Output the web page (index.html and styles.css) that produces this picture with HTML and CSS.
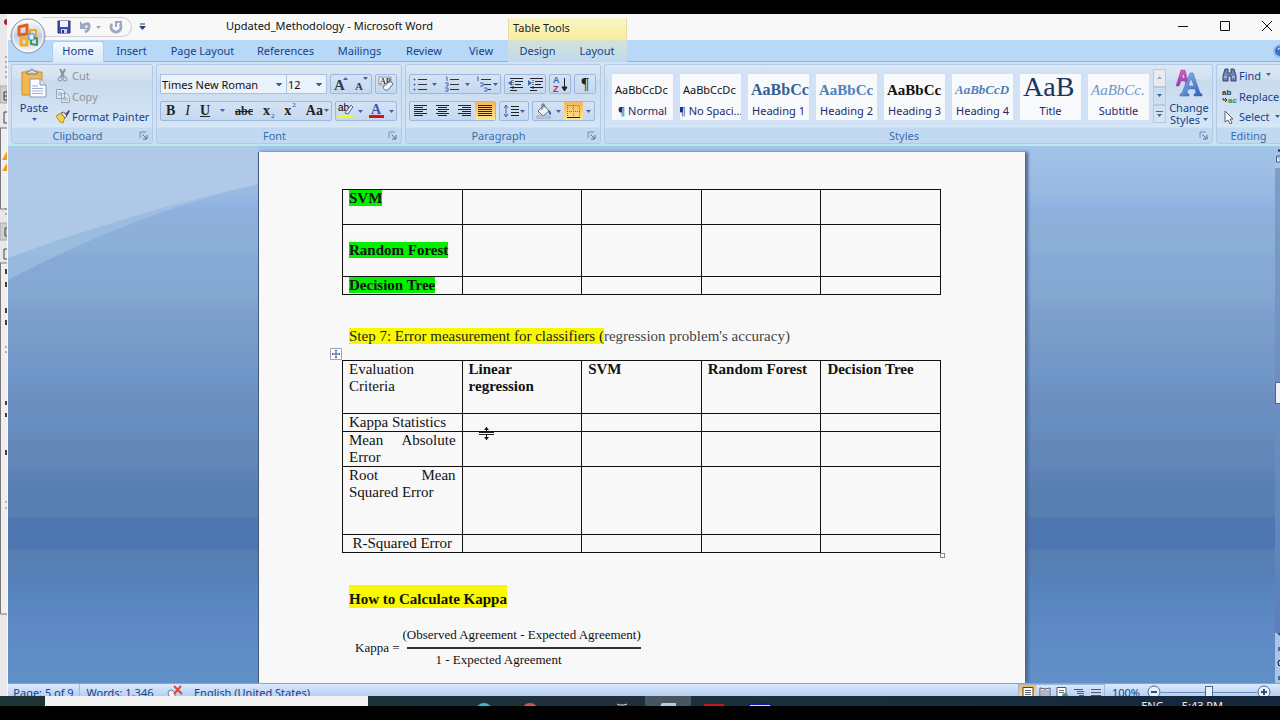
FILE: index.html
```html
<!DOCTYPE html>
<html lang="en">
<head>
  <meta charset="UTF-8">
  <meta name="viewport" content="width=device-width, initial-scale=1.0">
  <title>Updated_Methodology - Microsoft Word</title>
  <link rel="stylesheet" href="styles.css">
</head>
<body>

  <!-- Shared shapes -->
  <svg class="defs" width="0" height="0" aria-hidden="true">
    <defs>
      <path id="arrow" d="M0 0h5L2.500 3z" fill="#3f62a5"/>
      <g id="launcher"><path d="M1 7V1h6" fill="none" stroke="#6f8db5"/><path d="M3.500 3.500l4 4M8 4v4H4" fill="none" stroke="#4d6b96"/></g>
      <linearGradient id="orb" x1="0" y1="0" x2="0" y2="1"><stop offset="0" stop-color="#fff"/><stop offset="0.5" stop-color="#c3cddd"/><stop offset="1" stop-color="#f6f9fd"/></linearGradient>
      <linearGradient id="purple" x1="0" y1="0" x2="0" y2="1"><stop offset="0" stop-color="#d75bc4"/><stop offset="1" stop-color="#8b3fa8"/></linearGradient>
      <linearGradient id="blue" x1="0" y1="0" x2="1" y2="1"><stop offset="0" stop-color="#8fc0f5"/><stop offset="1" stop-color="#2f5fb5"/></linearGradient>
    </defs>
  </svg>

  <div class="desktop">
    <!-- Edge of the window behind -->
    <svg class="behind" width="8" height="682" viewBox="0 0 8 682" aria-hidden="true">
      <path d="M0 0h8v682H0z" fill="#e9e7e8"/>
      <path d="M0 114h7v81H0zM0 249h7v351H0z" fill="#f1eeef"/>
      <path d="M0 114h7M.5 114v81H7M0 249h7M.5 249v351H7" fill="none" stroke="#777"/>
      <path d="M0 72h7v17H0zM0 209h7v17H0z" fill="#cfcdce" stroke="#aaa"/>
      <path d="M7 78H4v8h3M4 82h3M7 214H5v8h2M7 98H4v11h3M7 235H4v10h3" fill="none" stroke="#444"/>
      <path d="M7 137v9H2zM7 149v8H2z" fill="#e9a11c"/>
      <circle cx="7" cy="8" r="3" fill="#a12a35"/>
      <path d="M5 43h2M5 48h2M5 53h2M5 58h2M5 63h2M5 195h2M5 200h2M5 333h2M5 338h2M5 488h2M5 494h2" stroke="#777"/>
      <path d="M6 255v5M6 268v5M6 294v5M6 306v5M6 387v4M6 399v4M6 436v5" stroke="#443c38" stroke-width="2"/>
      <path d="M7.500 0v682" stroke="#f9f9fc"/>
    </svg>

    <div class="window">
      <button class="office-button" aria-label="Office Button">
        <svg width="38" height="38" viewBox="0 0 38 38">
          <circle cx="19" cy="19" r="17" fill="url(#orb)" stroke="#8895aa"/>
          <circle cx="19" cy="19" r="15" fill="none" stroke="#fff" opacity=".7"/>
          <path d="M10 10l8-2v9l-8 1z" fill="none" stroke="#e1601d" stroke-width="3" stroke-linejoin="round"/>
          <path d="M21 13h6v7h-6z" fill="none" stroke="#f0a72a" stroke-width="2" stroke-linejoin="round"/>
          <path d="M12 21h6v7h-6z" fill="none" stroke="#edae28" stroke-width="3" stroke-linejoin="round"/>
          <path d="M22 22l6-1v7l-6-1z" fill="none" stroke="#3e9a57" stroke-width="2" stroke-linejoin="round"/>
          <path d="M20 17h5v6h-5z" fill="#dff1fb" stroke="#3a8fd2"/>
        </svg>
      </button>

      <header class="titlebar">
        <div class="quick-access">
          <div class="quick-pill">
            <button aria-label="Save"><svg width="14" height="14" viewBox="0 0 14 14"><path d="M1 1h12v12H1z" fill="#4148a8" stroke="#29307f"/><path d="M3 1h8v6H3z" fill="#eef3fc"/><path d="M4 9h6v4H4z" fill="#c9d2ee"/><path d="M5 10h2v3H5z" fill="#29307f"/></svg></button>
            <button aria-label="Undo"><svg width="22" height="14" viewBox="0 0 22 14"><path d="M3 6q8-5 7 1 0 3-4 5" fill="none" stroke="#9ba9c4" stroke-width="3"/><path d="M1 1v8h7z" fill="#9ba9c4"/><path d="M17 6h5l-2.500 3z" fill="#a7a7ae"/></svg></button>
            <button aria-label="Repeat"><svg width="14" height="14" viewBox="0 0 14 14"><path d="M3 4a5 5 0 1 0 8 0" fill="none" stroke="#9ba9c4" stroke-width="3"/><path d="M7 1v6M7 2h5v4" fill="none" stroke="#9ba9c4" stroke-width="2"/></svg></button>
          </div>
          <button class="customize" aria-label="Customize Quick Access Toolbar"><svg width="7" height="8" viewBox="0 0 7 8"><path d="M1 1h5" stroke="#254078"/><path d="M0 3h7L3.500 7z" fill="#254078"/></svg></button>
        </div>
        <div class="doc-title">Updated_Methodology - Microsoft Word</div>
        <div class="context-title">Table Tools</div>
        <div class="window-buttons">
          <button aria-label="Minimize"><svg width="12" height="12" viewBox="0 0 12 12"><path d="M1 6.500h10" stroke="#111"/></svg></button>
          <button aria-label="Maximize"><svg width="12" height="12" viewBox="0 0 12 12"><path d="M1.500 1.500h9v9h-9z" fill="none" stroke="#111"/></svg></button>
          <button aria-label="Close"><svg width="12" height="12" viewBox="0 0 12 12"><path d="M1 1l10 10M11 1L1 11" stroke="#111"/></svg></button>
        </div>
      </header>

      <nav class="tabs">
        <button class="tab active">Home</button>
        <button class="tab">Insert</button>
        <button class="tab">Page Layout</button>
        <button class="tab">References</button>
        <button class="tab">Mailings</button>
        <button class="tab">Review</button>
        <button class="tab">View</button>
        <button class="tab context">Design</button>
        <button class="tab context">Layout</button>
        <button class="help" aria-label="Help"><svg width="14" height="14" viewBox="0 0 14 14"><circle cx="7" cy="7" r="6" fill="#3471d4" stroke="#9dbbe8" stroke-width="2"/><path d="M5 6q0-2 2-2t2 2-2 2" fill="none" stroke="#fff"/></svg></button>
      </nav>

      <div class="ribbon">
        <section class="group clipboard">
          <div class="group-body">
            <button class="big-button">
              <svg width="28" height="30" viewBox="0 0 28 30"><path d="M2 4h20v23H2z" fill="#f0b84e" stroke="#c98f2c"/><path d="M7 6V3h3q2-4 4 0h3v3z" fill="#d5d5d5" stroke="#777"/><path d="M10 11h10l6 6v12H10z" fill="#fafcff" stroke="#8797b4"/><path d="M20 11v6h6" fill="#dde6f4" stroke="#8797b4"/><path d="M12 18h6M12 20.500h11M12 23h11M12 25.500h11" stroke="#9fb2d4"/></svg>
              <span>Paste</span>
              <svg width="5" height="4"><use href="#arrow"/></svg>
            </button>
            <div class="small-list">
              <button class="disabled"><svg width="14" height="14" viewBox="0 0 14 14"><path d="M4 1l4 8M9 1L5 9" stroke="#8793a5" stroke-width="2"/><circle cx="4" cy="11" r="2" fill="none" stroke="#8793a5"/><circle cx="9" cy="11" r="2" fill="none" stroke="#8793a5"/></svg>Cut</button>
              <button class="disabled"><svg width="14" height="14" viewBox="0 0 14 14"><path d="M.5.500h6l2 2v7h-8zM5.500 4.500h5l3 3v6h-8z" fill="#e2e8f1" stroke="#9aa5b8"/><path d="M7 9h5M7 11h5M2 4h3M2 6h3" stroke="#9aa5b8"/></svg>Copy</button>
              <button><svg width="14" height="14" viewBox="0 0 14 14"><path d="M0 6l5-3 4 4-2 6-3-1z" fill="#f6cf4c" stroke="#b8902c"/><path d="M5 3l3-1 3 4-2 2z" fill="#e8e8e8" stroke="#666"/><path d="M9 4l4-4 1 1-3 5z" fill="#454b75"/></svg>Format Painter</button>
            </div>
          </div>
          <div class="group-label"><span>Clipboard</span><button aria-label="Clipboard options"><svg width="9" height="9"><use href="#launcher"/></svg></button></div>
        </section>

        <section class="group font">
          <div class="group-body rows">
            <div class="row">
              <div class="combos">
                <select class="font-name" aria-label="Font"><option>Times New Roman</option></select>
                <select class="font-size" aria-label="Font Size"><option>12</option></select>
              </div>
              <div class="toolbox">
                <button aria-label="Grow Font"><svg width="20" height="18" viewBox="0 0 20 18"><text x="3" y="15" class="letter" font-size="15">A</text><path d="M12 5h5l-2.500-3z" fill="#3f62a5"/></svg></button>
                <button aria-label="Shrink Font"><svg width="20" height="18" viewBox="0 0 20 18"><text x="4" y="15" class="letter" font-size="11">A</text><use href="#arrow" x="12" y="2"/></svg></button>
              </div>
              <div class="toolbox">
                <button aria-label="Clear Formatting"><svg width="20" height="18" viewBox="0 0 20 18"><path d="M3 2h12v8H3z" fill="#f5f7fc" stroke="#8c97ad"/><text x="4" y="9" class="letter" font-size="8">AB</text><path d="M7 12l6-5q3-1 4 2l-5 6q-4 1-5-3z" fill="#f5f6fa" stroke="#5d6e94"/></svg></button>
              </div>
            </div>
            <div class="row">
              <div class="toolbox grow">
                <button class="text-tool bold">B</button>
                <button class="text-tool italic">I</button>
                <button class="text-tool underline">U</button>
                <button aria-label="Underline style"><svg width="5" height="4"><use href="#arrow"/></svg></button>
                <button class="text-tool strike">abc</button>
                <button class="text-tool script">x<sub>2</sub></button>
                <button class="text-tool script">x<sup>2</sup></button>
                <button class="text-tool case">Aa<svg width="5" height="4"><use href="#arrow"/></svg></button>
              </div>
              <div class="toolbox">
                <button aria-label="Text Highlight Color"><svg width="30" height="18" viewBox="0 0 30 18"><text x="2" y="9" font-size="10" font-family="Liberation Sans">ab</text><path d="M9 11l6-8 2 2-5 7z" fill="#e4e7ee" stroke="#5c6a88"/><path d="M2 13h15v3H2z" fill="#fdf900"/><use href="#arrow" x="22" y="8"/></svg></button>
                <button aria-label="Font Color"><svg width="30" height="18" viewBox="0 0 30 18"><text x="5" y="12" font-size="14" font-weight="bold" fill="#3b5d9e" font-family="Liberation Serif">A</text><path d="M3 13h15v3H3z" fill="#e80d0d"/><use href="#arrow" x="23" y="8"/></svg></button>
              </div>
            </div>
          </div>
          <div class="group-label"><span>Font</span><button aria-label="Font options"><svg width="9" height="9"><use href="#launcher"/></svg></button></div>
        </section>

        <section class="group paragraph">
          <div class="group-body rows">
            <div class="row">
              <div class="toolbox">
                <button aria-label="Bullets"><svg width="32" height="18" viewBox="0 0 32 18"><path d="M8 4.500h9M8 9.500h9M8 14.500h9" stroke="#333"/><path d="M4 4h1v1H4zM4 9h1v1H4zM4 14h1v1H4z" fill="#3b66b5" stroke="#3b66b5"/><use href="#arrow" x="22" y="8"/></svg></button>
                <button aria-label="Numbering"><svg width="32" height="18" viewBox="0 0 32 18"><path d="M8 4.500h9M8 9.500h9M8 14.500h9" stroke="#333"/><path d="M4 2h1v4M3 8h3v3H4M3 13h3v3H3" fill="none" stroke="#3b66b5"/><use href="#arrow" x="23" y="8"/></svg></button>
                <button aria-label="Multilevel List"><svg width="26" height="18" viewBox="0 0 26 18"><path d="M7 4.500h10M10 9.500h7M14 14.500h3" stroke="#333"/><path d="M3 2h1v4M6 8h3v3H6M10 13h3v3h-3" fill="none" stroke="#3b66b5"/><use href="#arrow" x="19" y="8"/></svg></button>
              </div>
              <div class="toolbox">
                <button aria-label="Decrease Indent"><svg width="20" height="18" viewBox="0 0 20 18"><path d="M5 3.500h13M10 6.500h8M10 9.500h6M5 12.500h13M5 15.500h7" stroke="#222"/><path d="M8 3v13" stroke="#222" stroke-dasharray="1 1"/><path d="M3 8l4-3v6z" fill="#3b66b5"/></svg></button>
                <button aria-label="Increase Indent"><svg width="20" height="18" viewBox="0 0 20 18"><path d="M5 3.500h13M10 6.500h8M10 9.500h6M5 12.500h13M5 15.500h7" stroke="#222"/><path d="M8 3v13" stroke="#222" stroke-dasharray="1 1"/><path d="M7 8L3 5v6z" fill="#3b66b5"/></svg></button>
              </div>
              <div class="toolbox">
                <button aria-label="Sort"><svg width="20" height="18" viewBox="0 0 20 18"><text x="3" y="8" font-size="9" font-weight="bold" fill="#3b66b5" font-family="Liberation Sans">A</text><text x="3" y="17" font-size="9" font-weight="bold" fill="#a8323e" font-family="Liberation Sans">Z</text><path d="M14.500 3v12M12 12l2.500 4 2.500-4z" fill="#222" stroke="#222"/></svg></button>
              </div>
              <div class="toolbox">
                <button class="text-tool pilcrow">¶</button>
              </div>
            </div>
            <div class="row">
              <div class="toolbox">
                <button aria-label="Align Left"><svg width="21" height="18" viewBox="0 0 21 18"><path d="M4 3.500h13M4 5.500h9M4 7.500h13M4 9.500h9M4 11.500h13M4 13.500h9" stroke="#222"/></svg></button>
                <button aria-label="Center"><svg width="22" height="18" viewBox="0 0 22 18"><path d="M5 3.500h13M7 5.500h9M5 7.500h13M7 9.500h9M5 11.500h13M7 13.500h9" stroke="#222"/></svg></button>
                <button aria-label="Align Right"><svg width="22" height="18" viewBox="0 0 22 18"><path d="M5 3.500h13M9 5.500h9M5 7.500h13M9 9.500h9M5 11.500h13M9 13.500h9" stroke="#222"/></svg></button>
                <button class="pressed" aria-label="Justify"><svg width="20" height="18" viewBox="0 0 20 18"><path d="M3 3.500h14M3 5.500h14M3 7.500h14M3 9.500h14M3 11.500h14M3 13.500h14" stroke="#222"/></svg></button>
              </div>
              <div class="toolbox">
                <button aria-label="Line Spacing"><svg width="28" height="18" viewBox="0 0 28 18"><path d="M11 4.500h8M11 7.500h8M11 10.500h8M11 13.500h8" stroke="#222"/><path d="M6 4v10M4 6l2-3 2 3M4 12l2 3 2-3" fill="none" stroke="#3b66b5"/><use href="#arrow" x="20" y="8"/></svg></button>
              </div>
              <div class="toolbox">
                <button aria-label="Shading"><svg width="31" height="18" viewBox="0 0 31 18"><path d="M5 9l6-6 5 6-6 5z" fill="#f1f4f8" stroke="#5d6b82"/><path d="M9 8V2h2v4" fill="none" stroke="#5d6b82"/><path d="M15 8q4 1 3 5l-2-1z" fill="#3b66b5"/><path d="M4 14h13v2H4z" fill="#e9eef6" stroke="#8f9db2"/><use href="#arrow" x="23" y="8"/></svg></button>
                <button class="pressed" aria-label="Borders"><svg width="19" height="18" viewBox="0 0 19 18"><path d="M3.500 3.500h12v11M9.500 3v12M3 9.500h13M3.500 3v12" fill="none" stroke="#8b6a3c" stroke-dasharray="1 1"/><path d="M3 15.500h13" stroke="#222"/></svg></button>
                <button aria-label="Border style"><svg width="11" height="18"><use href="#arrow" x="3" y="8"/></svg></button>
              </div>
            </div>
          </div>
          <div class="group-label"><span>Paragraph</span><button aria-label="Paragraph options"><svg width="9" height="9"><use href="#launcher"/></svg></button></div>
        </section>

        <section class="group styles">
          <div class="group-body">
            <div class="gallery">
              <button class="style-card"><span class="preview">AaBbCcDc</span><span>¶ Normal</span></button>
              <button class="style-card"><span class="preview">AaBbCcDc</span><span>¶ No Spaci...</span></button>
              <button class="style-card"><span class="preview heading1">AaBbCc</span><span>Heading 1</span></button>
              <button class="style-card"><span class="preview heading2">AaBbCc</span><span>Heading 2</span></button>
              <button class="style-card"><span class="preview heading3">AaBbCc</span><span>Heading 3</span></button>
              <button class="style-card"><span class="preview heading4">AaBbCcD</span><span>Heading 4</span></button>
              <button class="style-card"><span class="preview title">AaB</span><span>Title</span></button>
              <button class="style-card"><span class="preview subtitle">AaBbCc.</span><span>Subtitle</span></button>
            </div>
            <div class="gallery-scroll">
              <button class="off" aria-label="Previous styles"><svg width="5" height="4" viewBox="0 0 5 4"><path d="M0 3h5L2.500 0z" fill="#a5a9b0"/></svg></button>
              <button aria-label="Next styles"><svg width="5" height="4"><use href="#arrow"/></svg></button>
              <button aria-label="More styles"><svg width="7" height="7" viewBox="0 0 7 7"><path d="M0 .5h7" stroke="#3f62a5"/><use href="#arrow" x="1" y="3"/></svg></button>
            </div>
            <button class="big-button change">
              <svg width="28" height="30" viewBox="0 0 28 30"><path d="M1 18L6 2h4l4 15h-3l-1-4H6l-2 5zM7 10h3L8 5z" fill="url(#purple)" fill-rule="evenodd" stroke="#a045a5" stroke-width=".5"/><path d="M5 28v-2l2-1L15 5h3l7 20 2 1v2h-8v-2l2-1-1-4h-7l-1 4 2 1v2zM13 18h6l-3-8z" fill="url(#blue)" fill-rule="evenodd" stroke="#3a66b0" stroke-width=".5"/></svg>
              <span>Change</span>
              <span>Styles <svg width="5" height="4"><use href="#arrow"/></svg></span>
            </button>
          </div>
          <div class="group-label"><span>Styles</span><button aria-label="Styles options"><svg width="9" height="9"><use href="#launcher"/></svg></button></div>
        </section>

        <section class="group editing">
          <div class="group-body">
            <div class="small-list">
              <button><svg width="15" height="14" viewBox="0 0 15 14"><path d="M3 1h3v4h3V1h3l2 7v5H9V8H6v5H1V8z" fill="#6d86b8" stroke="#2c4376"/><path d="M2 9h3M10 9h3" stroke="#dce6f6"/></svg>Find<svg class="drop" width="5" height="4"><use href="#arrow"/></svg></button>
              <button><svg width="15" height="14" viewBox="0 0 15 14"><text x="0" y="6" font-size="8" font-weight="bold" font-family="Liberation Sans" fill="#333">ab</text><text x="6" y="14" font-size="8" font-weight="bold" font-family="Liberation Sans" fill="#2b8a45">ac</text><path d="M1 9v2h4M3 9l2 2-2 2" fill="none" stroke="#333"/></svg>Replace</button>
              <button><svg width="15" height="14" viewBox="0 0 15 14"><path d="M3 1l8 8H8l2 4-2 1-2-4-3 2z" fill="#fff" stroke="#555d70"/></svg>Select<svg class="drop" width="5" height="4"><use href="#arrow"/></svg></button>
            </div>
          </div>
          <div class="group-label"><span>Editing</span></div>
        </section>
      </div>

      <main class="workspace">
        <svg class="sweep" viewBox="0 0 250 140" preserveAspectRatio="none" aria-hidden="true">
          <path d="M0 0H250V38Q125 68 0 134z" fill="#a5c4e4" opacity=".6"/>
          <path d="M0 0H250V38Q125 66 0 112z" fill="#b2cae8" opacity=".85"/>
        </svg>

        <article class="page">
          <table class="grid models">
            <tbody>
              <tr><th><mark class="green">SVM</mark></th><td></td><td></td><td></td><td></td></tr>
              <tr class="tall"><th><mark class="green">Random Forest</mark></th><td></td><td></td><td></td><td></td></tr>
              <tr class="short"><th><mark class="green">Decision Tree</mark></th><td></td><td></td><td></td><td></td></tr>
            </tbody>
          </table>

          <p class="step"><mark>Step 7: Error measurement for classifiers (</mark>regression problem's accuracy)</p>

          <div class="table-wrap">
            <svg class="move-handle" width="12" height="12" viewBox="0 0 12 12" aria-hidden="true"><path d="M.5.500h11v11H.500z" fill="#fff" stroke="#98a3b8"/><path d="M6 2v8M2 6h8M5 3l1-1 1 1M5 9l1 1 1-1M3 5L2 6l1 1M9 5l1 1-1 1" fill="none" stroke="#3b5c9c"/></svg>
            <table class="grid errors">
              <thead>
                <tr><td>Evaluation Criteria</td><th>Linear regression</th><th>SVM</th><th>Random Forest</th><th>Decision Tree</th></tr>
              </thead>
              <tbody>
                <tr class="short"><td>Kappa Statistics</td><td></td><td></td><td></td><td></td></tr>
                <tr><td class="justify">Mean Absolute Error</td><td></td><td></td><td></td><td></td></tr>
                <tr class="deep"><td class="justify">Root Mean Squared Error</td><td></td><td></td><td></td><td></td></tr>
                <tr class="short"><td class="centered">R-Squared Error</td><td></td><td></td><td></td><td></td></tr>
              </tbody>
            </table>
            <span class="resize-handle"></span>
            <svg class="pointer" width="15" height="15" viewBox="0 0 15 15" aria-hidden="true"><path d="M0 6.500h15M0 8.500h15" stroke="#222"/><path d="M7.500 1v5M7.500 9v5" stroke="#111"/><path d="M5 4h5L7.500 1zM5 11h5l-2.500 3z" fill="#111"/></svg>
          </div>

          <h2><mark>How to Calculate Kappa</mark></h2>

          <div class="formula">
            <span>Kappa =</span>
            <div class="fraction">
              <span>(Observed Agreement - Expected Agreement)</span>
              <span class="under">1 - Expected Agreement</span>
            </div>
          </div>
        </article>

        <div class="scrollbar">
          <svg width="5" height="22" viewBox="0 0 5 22" aria-hidden="true"><path d="M3 4.500h2" stroke="#222" stroke-width="2"/><path d="M1.500 10v6H5M1.500 10H5" fill="#eef3fa" stroke="#445a80"/></svg>
          <div class="track">
            <div class="thumb"></div>
          </div>
          <svg width="5" height="50" viewBox="0 0 5 50" aria-hidden="true"><path d="M2 0h3v3z" fill="#2c4f86"/><path d="M3 15h2M3 17h2M3 44h2M3 46h2" stroke="#111"/><circle cx="6" cy="30" r="3" fill="none" stroke="#111"/></svg>
        </div>
      </main>

      <footer class="status">
        <button class="page-count">Page: 5 of 9</button>
        <button class="word-count">Words: 1,346</button>
        <button class="proof" aria-label="Proofing errors"><svg width="16" height="14" viewBox="0 0 16 14"><path d="M1 8q0-3 4-3l3 3v5H3z" fill="#f5f7fb" stroke="#6b7c9f"/><path d="M7 1l8 8M14 1L7 9" stroke="#dc4a31" stroke-width="2"/></svg></button>
        <button class="language">English (United States)</button>
        <div class="views">
          <button class="pressed" aria-label="Print Layout"><svg width="12" height="12" viewBox="0 0 12 12"><path d="M1 .5h10v11H1z" fill="#fff" stroke="#444"/><path d="M3 3.500h6M3 5.500h6M3 7.500h6M3 9.500h6" stroke="#666"/></svg></button>
          <button aria-label="Full Screen Reading"><svg width="12" height="12" viewBox="0 0 12 12"><path d="M1 1l5 1 5-1v10l-5 1-5-1z" fill="#f0f3f8" stroke="#556"/><path d="M6 2v10M2 4h3M7 4h3M2 6h3M7 6h3M2 8h3M7 8h3" stroke="#778"/></svg></button>
          <button aria-label="Web Layout"><svg width="12" height="12" viewBox="0 0 12 12"><path d="M1 .5h9v11H1z" fill="#fff" stroke="#556"/><path d="M3 3.500h5M3 5.500h5" stroke="#667"/><circle cx="9" cy="9" r="3" fill="#45a06e"/></svg></button>
          <button aria-label="Outline"><svg width="12" height="12" viewBox="0 0 12 12"><path d="M1 2.500h9M4 4.500h7M4 6.500h7M6 8.500h5M6 10.500h5" stroke="#556"/></svg></button>
          <button aria-label="Draft"><svg width="12" height="12" viewBox="0 0 12 12"><path d="M1 2.500h10M1 5.500h10M1 8.500h10" stroke="#556"/></svg></button>
        </div>
        <button class="percent">100%</button>
        <div class="zoom">
          <button aria-label="Zoom Out"><svg width="14" height="14" viewBox="0 0 14 14"><circle cx="7" cy="7" r="6" fill="#e8f0fb" stroke="#4f6890"/><path d="M4 7h6" stroke="#344d78" stroke-width="2"/></svg></button>
          <input type="range" min="0" max="100" value="50" aria-label="Zoom">
          <button aria-label="Zoom In"><svg width="14" height="14" viewBox="0 0 14 14"><circle cx="7" cy="7" r="6" fill="#e8f0fb" stroke="#4f6890"/><path d="M4 7h6M7 4v6" stroke="#344d78" stroke-width="2"/></svg></button>
        </div>
      </footer>
    </div>
  </div>

  <div class="taskbar">
    <input class="search" type="text" aria-label="Search">
    <div class="apps">
      <button aria-label="Browser"><svg width="18" height="10" viewBox="0 0 18 10"><circle cx="9" cy="15" r="8" fill="#34bfc9"/></svg></button>
      <button aria-label="Recorder"><svg width="18" height="10" viewBox="0 0 18 10"><circle cx="9" cy="15" r="8" fill="#d5544c"/></svg></button>
      <button aria-label="Files"></button>
      <button aria-label="Mail"><svg width="18" height="10" viewBox="0 0 18 10"><path d="M4 8l2 1h5l3-1" fill="none" stroke="#ddd"/></svg></button>
      <button class="current" aria-label="Word"><svg width="18" height="10" viewBox="0 0 18 10"><path d="M3 7h14v3H1z" fill="#b9c8e4"/></svg></button>
      <button aria-label="Reader"><svg width="20" height="10" viewBox="0 0 20 10"><path d="M0 8h20v2H0z" fill="#bf1b20"/></svg></button>
      <button aria-label="Console"><svg width="24" height="10" viewBox="0 0 24 10"><path d="M1 10V8h22v2" fill="#dfe4f5" stroke="#1417a5" stroke-width="2"/></svg></button>
    </div>
    <span class="input-language">ENG</span>
    <span class="clock">5:43 PM</span>
  </div>

</body>
</html>
```
FILE: styles.css
```css
* {
  box-sizing: border-box;
}

body {
  margin: 0;
  padding: 14px 0;
  height: 100vh;
  display: flex;
  flex-direction: column;
  overflow: hidden;
  background-color: #000;
  font-family: "Noto Sans", "Open Sans", sans-serif;
  font-size: 11px;
  color: #15428b;
}

button {
  display: flex;
  align-items: center;
  justify-content: center;
  padding: 0;
  border: 0;
  background: none;
  font: inherit;
  color: inherit;
  white-space: nowrap;
}

svg {
  display: block;
  flex-shrink: 0;
}

.defs {
  position: absolute;
}

.desktop {
  flex: 1;
  min-height: 0;
  display: flex;
  overflow: hidden;
}

.window {
  position: relative;
  flex: 1;
  min-width: 0;
  display: flex;
  flex-direction: column;
  overflow: hidden;
}

/* Title bar */
.office-button {
  position: absolute;
  left: 1px;
  top: 3px;
  z-index: 2;
}

.titlebar {
  display: flex;
  height: 26px;
  background-color: #f8f8f8;
}

.quick-access {
  flex: 0 0 143px;
  display: flex;
  align-items: center;
  padding-left: 34px;
}

.quick-pill {
  display: flex;
  align-items: center;
  gap: 8px;
  width: 90px;
  height: 20px;
  padding-left: 15px;
  border: 1px solid #d3cfda;
  border-left: 0;
  border-radius: 0 10px 10px 0;
}

.customize {
  margin-left: 7px;
}

.doc-title {
  flex: 0 0 357px;
  line-height: 24px;
  text-align: center;
  color: #111;
}

.context-title {
  flex: 0 0 119px;
  margin-top: 4px;
  padding-left: 4px;
  line-height: 20px;
  color: #222;
  background: linear-gradient(#faf6c8, #f7ee9c);
  border-left: 1px solid #e5df9f;
  border-right: 1px solid #e5df9f;
}

.window-buttons {
  display: flex;
  margin-left: auto;
  margin-right: -8px;
}

.window-buttons button {
  width: 42px;
  height: 24px;
}

/* Tabs */
.tabs {
  display: grid;
  grid-template-columns: 52px 55px 87px 79px 69px 60px 54px 59px 60px 1fr;
  height: 22px;
  padding-left: 44px;
  background-color: #b8d8f8;
  border-bottom: 1px solid #8db2e3;
}

.tab {
  padding-bottom: 1px;
}

.tab.active {
  margin-top: 1px;
  height: 21px;
  padding-bottom: 3px;
  border: 1px solid #a9cdf2;
  border-bottom: 0;
  border-radius: 3px 3px 0 0;
  background: linear-gradient(#f2f8fe, #dce9f7);
}

.tab.context {
  background: linear-gradient(#d4e3d4, #bfd9f0);
}

.help {
  justify-self: end;
  margin-right: -7px;
}

/* Ribbon */
.ribbon {
  display: flex;
  gap: 3px;
  height: 84px;
  padding: 2px 0 2px 3px;
  background-color: #cfe1f5;
  border-bottom: 2px solid #b9eaf2;
}

.group {
  display: flex;
  flex-direction: column;
  height: 80px;
  border: 1px solid #b2cae6;
  border-radius: 3px;
  background: linear-gradient(#dce8f4 0, #d3e0ef 14px, #c8daec 15px, #d5e6f6 62px, #c1daf1 63px);
}

.clipboard {
  flex: 0 0 142px;
}

.font {
  flex: 0 0 246px;
}

.paragraph {
  flex: 0 0 196px;
}

.styles {
  flex: 1;
  min-width: 0;
}

.editing {
  flex: 0 0 64px;
  border-right: 0;
  border-radius: 3px 0 0 3px;
}

.group-body {
  flex: 1;
  min-height: 0;
  display: flex;
}

.group-label {
  display: flex;
  align-items: center;
  height: 16px;
  padding: 0 4px;
  color: #3e6aaa;
}

.group-label span {
  flex: 1;
  text-align: center;
}

.big-button {
  flex-direction: column;
  justify-content: flex-start;
  width: 44px;
  padding-top: 3px;
  line-height: 12px;
}

.big-button span {
  display: flex;
  align-items: center;
  gap: 3px;
}

.big-button span:first-of-type {
  margin-top: 4px;
}

.big-button > svg:last-child {
  margin-top: 4px;
}

.small-list {
  display: flex;
  flex-direction: column;
}

.small-list button {
  justify-content: flex-start;
  gap: 2px;
  height: 21px;
}

.small-list .drop {
  margin-left: 3px;
}

.disabled {
  color: #8d949e;
}

.rows {
  flex-direction: column;
  gap: 7px;
  padding: 9px 4px 0 3px;
}

.row {
  display: flex;
  gap: 3px;
}

.combos {
  flex: 1;
  display: flex;
}

select {
  appearance: none;
  height: 20px;
  padding: 0 1px;
  border: 1px solid #abc1de;
  border-radius: 0;
  background: linear-gradient(to bottom right, #3f62a5 50%, transparent 51%) no-repeat right 4px top 8px / 3px 3px, linear-gradient(to bottom left, #3f62a5 50%, transparent 51%) no-repeat right 7px top 8px / 3px 3px, #eaf2fb;
  font: inherit;
  color: #111;
}

.font-name {
  flex: 1;
  min-width: 0;
}

.font-size {
  width: 40px;
  border-left: 0;
}

.toolbox {
  display: flex;
  height: 20px;
  border: 1px solid #9db8dc;
  border-radius: 2px;
  background: linear-gradient(#d5e3f5, #c4d8ef);
}

.toolbox.grow {
  flex: 1;
  justify-content: space-between;
  padding: 0 2px 0 5px;
}

.letter {
  font-family: "Liberation Serif", serif;
  font-weight: bold;
  fill: #333b4a;
}

.text-tool {
  gap: 1px;
  font-family: "Liberation Serif", serif;
  font-size: 14px;
  color: #222;
}

.bold,
.strike,
.script,
.underline,
.case {
  font-weight: bold;
}

.italic {
  font-style: italic;
}

.underline {
  text-decoration: underline;
}

.strike {
  font-size: 12px;
  text-decoration: line-through;
}

.script sub,
.script sup {
  font-size: 7px;
  line-height: 7px;
  color: #3b66b5;
}

.script sub {
  align-self: flex-end;
}

.script sup {
  align-self: flex-start;
}

.pilcrow {
  width: 20px;
  font-size: 16px;
}

.pressed {
  background: linear-gradient(#f5b65c, #fde68d);
}

/* Styles gallery */
.gallery {
  flex: 1;
  min-width: 0;
  display: grid;
  grid-template-columns: repeat(8, minmax(0, 1fr));
  gap: 7px;
  margin: 4px 0 2px 3px;
  padding: 5px 4px;
  background-color: #d2e2f6;
}

.style-card {
  flex-direction: column;
  justify-content: flex-end;
  height: 46px;
  padding: 0 0 2px;
  overflow: hidden;
  background-color: #f8f9fb;
  line-height: 14px;
  color: #1e2a6b;
}

.preview {
  flex: 1;
  align-self: stretch;
  padding-left: 3px;
  overflow: hidden;
  line-height: 32px;
  text-align: left;
  color: #111;
}

.heading1,
.heading2,
.heading3,
.heading4,
.title,
.subtitle {
  font-family: "Liberation Serif", serif;
  font-size: 15px;
  font-weight: bold;
}

.heading1 {
  font-size: 16px;
  color: #365f91;
}

.heading2 {
  color: #4f81bd;
}

.heading4 {
  font-size: 13px;
  font-style: italic;
  color: #4f81bd;
}

.title {
  font-size: 28px;
  font-weight: normal;
  line-height: 26px;
  color: #17365d;
}

.subtitle {
  font-style: italic;
  font-weight: normal;
  color: #6d97c9;
}

.gallery-scroll {
  display: flex;
  flex-direction: column;
  width: 13px;
  margin-top: 4px;
}

.gallery-scroll button {
  height: 18px;
  border: 1px solid #b4cbe8;
}

.gallery-scroll .off {
  background-color: #e9ebee;
}

.change {
  width: 46px;
}

.editing .small-list {
  padding-left: 5px;
}

/* Document */
.workspace {
  flex: 1;
  min-height: 0;
  display: grid;
  grid-template-columns: 1fr 767px 1fr 5px;
  padding-top: 6px;
  overflow: hidden;
  background: linear-gradient(#a4c4ea 0, #97b8e0 50px, #8fafe0 66px, #8eb0d8 80px, #8ab0d8 105px, #86a8d8 112px, #84a8d0 148px, #7e9fcf 165px, #789fc8 190px, #7797c8 205px, #6e98c8 230px, #6e8fc0 250px, #668fc0 280px, #6487b7 300px, #5f88b8 318px, #5f80b8 330px, #5780b0 345px, #5780b0 370px, #4e76b0 374px, #4e76b0 402px, #5780b0 406px, #5780b8 430px, #5787c0 456px, #5e88c4 475px, #6090c8 538px);
}

.sweep {
  width: 100%;
  height: 140px;
  margin-top: -6px;
}

.page {
  min-width: 0;
  padding: 37px 84px 0 83px;
  border-left: 1px solid #43597c;
  background-color: #f8f8f8;
  box-shadow: 3px 0 3px #4b6690;
  font-family: "Liberation Serif", "Times New Roman", serif;
  font-size: 15px;
  line-height: 17px;
  color: #111;
}

.grid {
  width: 100%;
  table-layout: fixed;
  border-collapse: collapse;
}

.grid th,
.grid td {
  height: 35px;
  padding: 0 6px;
  border: 1px solid #111;
  text-align: left;
  vertical-align: top;
}

.grid .short td,
.grid .short th {
  height: 18px;
}

.grid .tall td,
.grid .tall th {
  height: 52px;
  vertical-align: middle;
}

.grid .deep td {
  height: 68px;
}

.grid thead td,
.grid thead th {
  height: 53px;
}

.grid .justify {
  text-align: justify;
}

.grid .centered {
  text-align: center;
}

mark {
  background-color: #f8f800;
  color: inherit;
}

mark.green {
  background-color: #00f000;
}

.step {
  margin: 33px 0 15px 7px;
  color: #444;
}

.step mark {
  color: #222;
}

.table-wrap {
  position: relative;
}

.move-handle {
  position: absolute;
  left: -12px;
  top: -12px;
}

.resize-handle {
  position: absolute;
  right: -4px;
  bottom: -5px;
  width: 5px;
  height: 5px;
  border: 1px solid #888;
  background-color: #fff;
}

.pointer {
  position: absolute;
  left: 137px;
  top: 66px;
}

.page h2 {
  margin: 32px 0 15px 7px;
  font-size: 15px;
  line-height: 23px;
}

.page h2 mark {
  display: inline-block;
  padding-top: 6px;
  line-height: 17px;
}

.formula {
  display: flex;
  align-items: center;
  gap: 3px;
  padding-left: 13px;
  font-size: 13px;
}

.fraction {
  display: flex;
  flex-direction: column;
}

.under {
  margin: 4px 0 0 4px;
  padding: 2px 0 0 29px;
  border-top: 2px solid #333;
}

.scrollbar {
  grid-column: 4;
  display: flex;
  flex-direction: column;
  margin-top: -6px;
  background-color: #a8c4ea;
}

.track {
  flex: 1;
  background: linear-gradient(#809dc8, #5a7fbc);
}

.thumb {
  height: 22px;
  margin-top: 214px;
  border: 1px solid #4a6590;
  border-right: 0;
  background-color: #eef2f8;
}

/* Status bar */
.status {
  display: flex;
  align-items: flex-start;
  height: 13px;
  overflow: hidden;
  border-top: 1px solid #86a4cc;
  background: linear-gradient(#dbe9fb, #b6d0f3);
}

.status button {
  height: 16px;
}

.page-count {
  width: 72px;
  border-right: 1px solid #a1bbdd;
}

.status .word-count {
  width: 80px;
}

.proof {
  width: 30px;
}

.status .language {
  width: 124px;
}

.views {
  display: flex;
  margin-left: auto;
  border: 1px solid #9cb7dc;
}

.views button {
  width: 17px;
}

.percent {
  width: 42px;
}

.zoom {
  display: flex;
  align-items: center;
  margin-right: 9px;
}

.zoom input {
  appearance: none;
  width: 96px;
  height: 16px;
  margin: 0;
  background: linear-gradient(#6e8cb8, #6e8cb8) no-repeat center / 100% 1px;
}

.zoom input::-webkit-slider-thumb {
  appearance: none;
  width: 8px;
  height: 12px;
  border: 1px solid #4f6890;
  background-color: #e8f0fb;
}

/* Taskbar */
.taskbar {
  display: flex;
  height: 10px;
  overflow: hidden;
  background: linear-gradient(90deg, #1d3436, #1f2f3c 50%, #17303a 65%, #16263d);
  color: #eee;
}

.search {
  width: 323px;
  height: 10px;
  margin-left: 45px;
  padding: 0;
  border: 0;
  background-color: #f2f2f2;
}

.apps {
  display: flex;
  margin-left: 93px;
}

.apps button {
  width: 46px;
  height: 10px;
}

.apps .current {
  background-color: #46565f;
}

.input-language {
  margin-left: auto;
  line-height: 20px;
}

.clock {
  margin: 0 57px 0 18px;
  line-height: 20px;
}
```
